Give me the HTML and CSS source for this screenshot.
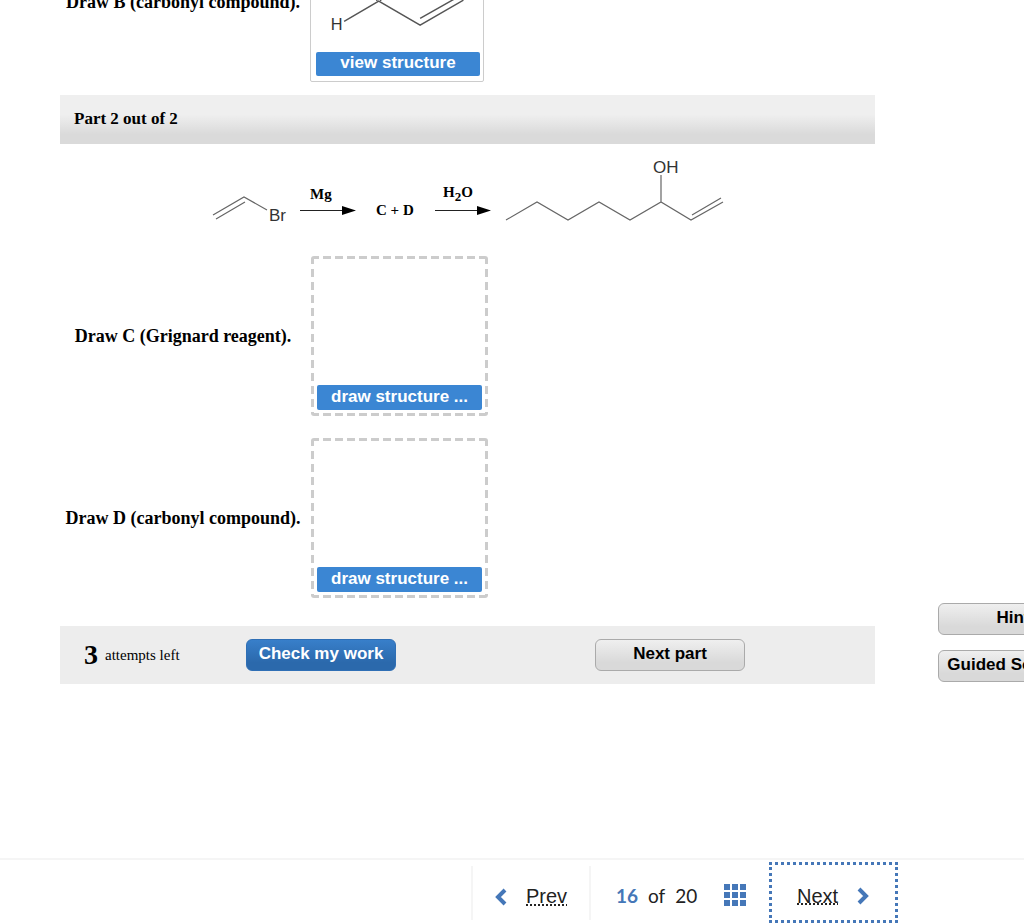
FILE: index.html
```html
<!DOCTYPE html>
<html lang="en">
<head>
    <meta charset="UTF-8">
    <meta name="viewport" content="width=device-width, initial-scale=1.0">
    <title>Question 16</title>
    <link rel="stylesheet" href="styles.css">
</head>
<body>
    <main class="page">
        <div class="question">
            <div class="answer-row first">
                <div class="answer-label">Draw B (carbonyl compound).</div>
                <div class="answer-box done">
                    <svg class="molecule" width="164" height="108" viewBox="0 0 164 108" fill="none" stroke="#555" stroke-width="1.5">
                        <path d="M26 97 L62 76 L105 101 L150 75 M105 94 L142 73 M60 76 V36 M64 76 V36"/>
                        <text class="atom" x="12" y="106">H</text>
                    </svg>
                    <button class="structure-btn">view structure</button>
                </div>
            </div>

            <h2 class="part-title">Part 2 out of 2</h2>

            <svg class="reaction" width="530" height="80" viewBox="0 0 530 80" fill="none">
                <g stroke="#666" stroke-width="1.2">
                    <path d="M8 65 L39 47 L62 60 M11 69 L40 52"/>
                    <path d="M301 70 L332 52 L363 70 L394 52 L425 70 L456 52 L486 70 L518 52 M487 65 L516 48 M456 52 V25"/>
                    <path d="M95 60.5 H139 M230 60.5 H274" stroke="#222" stroke-width="1"/>
                </g>
                <path d="M137 56 L151 60.5 L137 65 Z M272 56 L286 60.5 L272 65 Z" fill="#000"/>
                <text class="atom" x="64" y="71">Br</text>
                <text class="atom" x="448" y="23">OH</text>
                <text class="reagent" x="105" y="49">Mg</text>
                <text class="reagent" x="171" y="65">C + D</text>
                <text class="reagent" x="238" y="47">H<tspan class="sub" dy="4">2</tspan><tspan dy="-4">O</tspan></text>
            </svg>

            <div class="answer-row">
                <div class="answer-label">Draw C (Grignard reagent).</div>
                <div class="answer-box">
                    <button class="structure-btn">draw structure ...</button>
                </div>
            </div>
            <div class="answer-row">
                <div class="answer-label">Draw D (carbonyl compound).</div>
                <div class="answer-box">
                    <button class="structure-btn">draw structure ...</button>
                </div>
            </div>

            <div class="submit-bar">
                <div class="attempts"><b>3</b> attempts left</div>
                <button class="btn primary">Check my work</button>
                <button class="btn next-part">Next part</button>
            </div>
        </div>

        <div class="help">
            <button class="btn">Hint</button>
            <button class="btn">Guided Solution</button>
        </div>
    </main>

    <footer class="pager">
        <a class="prev" href="#">
            <svg width="13" height="18" viewBox="0 0 13 18" fill="none" stroke="#4577b8" stroke-width="4"><path d="M10 2 L3 9 L10 16"/></svg>
            <span>Prev</span>
        </a>
        <div class="count"><b>16</b><span class="of">of</span><span>20</span>
            <button class="grid-btn" aria-label="Question list">
                <svg width="22" height="22" viewBox="0 0 22 22" fill="#4577b8"><path d="M0 0h6v6H0z M8 0h6v6H8z M16 0h6v6h-6z M0 8h6v6H0z M8 8h6v6H8z M16 8h6v6h-6z M0 16h6v6H0z M8 16h6v6H8z M16 16h6v6h-6z"/></svg>
            </button>
        </div>
        <a class="next" href="#">
            <span>Next</span>
            <svg width="13" height="18" viewBox="0 0 13 18" fill="none" stroke="#4577b8" stroke-width="4"><path d="M3 2 L10 9 L3 16"/></svg>
        </a>
    </footer>
</body>
</html>
```

FILE: styles.css
```css
* {
    box-sizing: border-box;
}
body {
    margin: 0;
    height: 100vh;
    display: flex;
    flex-direction: column;
    overflow: hidden;
    background-color: #fff;
    color: #000;
    font-family: "Liberation Serif", "Times New Roman", serif;
}
.page {
    flex: 1;
    min-height: 0;
    display: flex;
    gap: 63px;
    padding-left: 60px;
    overflow: hidden;
}
.question {
    flex: 1;
}
.answer-row {
    display: flex;
    align-items: center;
    margin-bottom: 22px;
}
/* the previous part is scrolled off the top */
.answer-row.first {
    margin-top: -78px;
    margin-bottom: 13px;
}
.answer-label {
    width: 246px;
    text-align: center;
    font-size: 18px;
    font-weight: bold;
    white-space: nowrap;
}
/* dashes are drawn as backgrounds, the native dashed border is too tight */
.answer-box {
    display: flex;
    flex-direction: column;
    justify-content: flex-end;
    width: 177px;
    height: 160px;
    margin-left: 5px;
    padding: 6px;
    border-radius: 3px;
    background:
        repeating-linear-gradient(90deg, #ccc 0 8px, transparent 8px 12px) top / 100% 3px no-repeat,
        repeating-linear-gradient(90deg, #ccc 0 8px, transparent 8px 12px) bottom / 100% 3px no-repeat,
        repeating-linear-gradient(#ccc 0 8px, transparent 8px 13px) left / 3px 100% no-repeat,
        repeating-linear-gradient(#ccc 0 8px, transparent 8px 13px) right / 3px 100% no-repeat;
}
.answer-box.done {
    width: 174px;
    margin-left: 4px;
    padding: 5px 3px 5px 5px;
    border: 1px solid #ccc;
    border-radius: 2px;
    background: none;
}
.molecule {
    margin: 0 0 20px;
}
.structure-btn {
    width: 100%;
    height: 25px;
    padding: 0 0 1px;
    border: none;
    border-radius: 2px;
    background-color: #3b86d3;
    color: #fff;
    font: bold 17px "Liberation Sans", Arial, sans-serif;
}
.part-title {
    height: 49px;
    margin: 0;
    padding-left: 14px;
    background: linear-gradient(#efefef 40%, #dadada 80%);
    font-size: 17px;
    line-height: 48px;
}
.reaction {
    display: block;
    margin: 6px 0 26px 145px;
}
.atom {
    fill: #333;
    stroke: none;
    font: 17px "Liberation Sans", Arial, sans-serif;
}
.reagent {
    fill: #000;
    font: bold 15px "Liberation Serif", "Times New Roman", serif;
}
.reagent .sub {
    font-size: 13px;
}
.submit-bar {
    display: flex;
    align-items: center;
    height: 58px;
    margin-top: 28px;
    padding-left: 24px;
    background-color: #ededed;
}
.attempts {
    display: flex;
    align-items: center;
    gap: 7px;
    width: 162px;
    font-size: 15px;
}
.attempts b {
    font-size: 28px;
}
.btn {
    width: 150px;
    height: 32px;
    padding: 0 0 3px;
    border: 1px solid #aaa;
    border-radius: 6px;
    background: linear-gradient(#efefef, #d9d9d9 75%);
    color: #000;
    font: bold 17px "Liberation Sans", Arial, sans-serif;
    white-space: nowrap;
}
.btn.primary {
    border-color: #2f6fb5;
    background: linear-gradient(#387fca, #2b69ac 75%);
    color: #fff;
}
.next-part {
    margin-left: auto;
    margin-right: 130px;
}
.help {
    display: flex;
    flex-direction: column;
    gap: 15px;
    width: 86px;
    padding-top: 603px;
}
.pager {
    display: flex;
    justify-content: flex-end;
    height: 65px;
    padding-right: 126px;
    border-top: 2px solid #f5f5f5;
    font: 20px "Liberation Sans", Arial, sans-serif;
    color: #222;
}
.pager a {
    display: flex;
    align-items: center;
    gap: 18px;
    padding-top: 7px;
    color: #222;
    text-decoration: none;
}
.pager a span {
    text-decoration: underline dotted 2px;
    text-decoration-skip-ink: none;
    text-underline-offset: 1px;
}
.pager .prev {
    width: 120px;
    margin: 6px 0 3px;
    padding-left: 22px;
    border-left: 2px solid #f5f5f5;
    border-right: 2px solid #f5f5f5;
}
.count {
    display: flex;
    align-items: center;
    width: 178px;
    padding-left: 25px;
    padding-top: 7px;
    font-family: Lato, sans-serif;
    font-size: 19px;
}
.count b {
    color: #4577b8;
}
.count .of {
    margin: 0 10px;
}
.grid-btn {
    display: flex;
    margin-left: 27px;
    padding: 0;
    border: none;
    background: none;
}
.pager .next {
    width: 129px;
    margin: 2px 0 0;
    padding-left: 25px;
    border: 3px dotted #4577b8;
}
```
